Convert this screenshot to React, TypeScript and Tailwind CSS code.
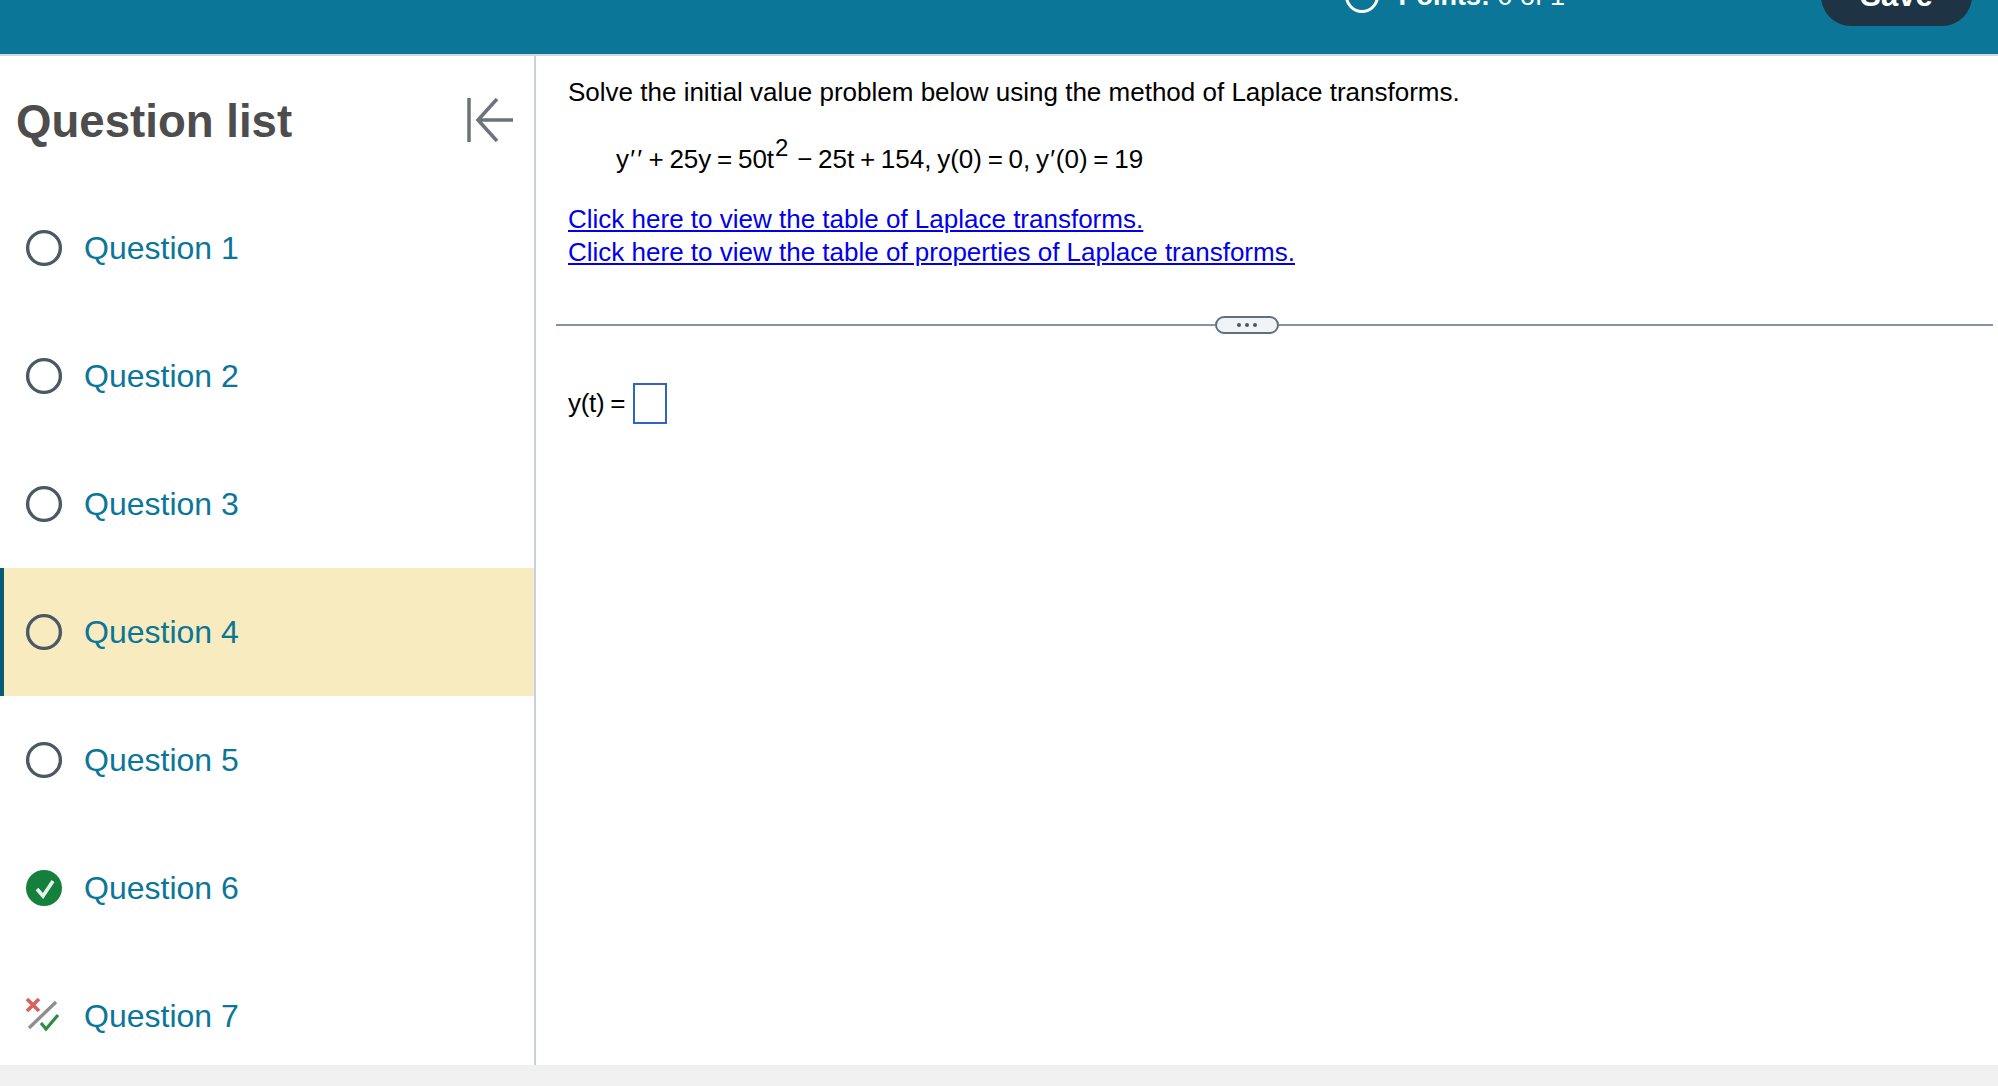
const questions = [
  { id: 1, status: "open" },
  { id: 2, status: "open" },
  { id: 3, status: "open" },
  { id: 4, status: "current" },
  { id: 5, status: "open" },
  { id: 6, status: "done" },
  { id: 7, status: "partial" },
];

function StatusIcon({ status }: { status: string }) {
  if (status === "done") {
    return (
      <svg width="38" height="38" viewBox="0 0 38 38" className="shrink-0">
        <circle cx="19" cy="19" r="18" fill="#14803c" />
        <path d="M12 20l6 7 10-15" fill="none" stroke="#e8f3ec" strokeWidth="3.6" />
      </svg>
    );
  }
  if (status === "partial") {
    return (
      <svg width="38" height="38" viewBox="0 0 38 38" className="shrink-0">
        <path d="M2 2l12 12M14 2L2 14" stroke="#d9605c" strokeWidth="3.6" />
        <path d="M4 31L31 5" stroke="#8f8f8f" strokeWidth="3.4" />
        <path d="M16 26l5 6 12-14" fill="none" stroke="#2e8b47" strokeWidth="3.2" />
      </svg>
    );
  }
  return (
    <svg width="38" height="38" viewBox="0 0 38 38" className="shrink-0">
      <circle cx="19" cy="19" r="16.4" fill="none" stroke="#4b5866" strokeWidth="3.4" />
    </svg>
  );
}

function QuestionRow({ id, status }: { id: number; status: string }) {
  const current = status === "current";
  return (
    <div
      className={
        current
          ? "flex h-[128px] items-center gap-[21px] border-l-4 border-[#055a75] bg-[#f8ebbf] pl-[21px]"
          : "flex h-[128px] items-center gap-[21px] pl-[25px]"
      }
    >
      <StatusIcon status={status} />
      <span className="text-[32px] text-[#0b7698]">Question {id}</span>
    </div>
  );
}

function Sidebar() {
  return (
    <aside className="w-[536px] shrink-0 overflow-hidden border-r-2 border-[#c8cfdf]">
      <div className="flex h-[128px] items-center justify-between pl-[16px] pr-[21px]">
        <h2 className="pt-[4px] text-[45.6px] font-bold text-[#4d4d4d]">Question list</h2>
        <svg width="46" height="46" viewBox="0 0 46 46" fill="none" stroke="#6b7478" strokeWidth="3.5">
          <path d="M2 1v44M30 2L11 23l19 21M11 23h35" />
        </svg>
      </div>
      {questions.map((q) => (
        <QuestionRow key={q.id} id={q.id} status={q.status} />
      ))}
    </aside>
  );
}

function Equation() {
  return (
    <p className="mt-[23px] flex h-[52px] items-end pb-[6px] pl-[60px] text-[26px] [word-spacing:-1.5px] text-black">
      <span>
        y<i className="tracking-[2px]">′′</i> + 25y = 50t
        <sup className="relative -top-[12px] ml-[1px] mr-[3px] align-baseline text-[24px]">2</sup> − 25t + 154, y(0) = 0, y<i className="mr-[2px]">′</i>(0) = 19
      </span>
    </p>
  );
}

function MainPanel() {
  return (
    <main className="min-w-0 flex-1 pr-[5px] pl-[20px] pt-[19px]">
      <p className="pl-[12px] text-[26px] leading-[35px] text-black">
        Solve the initial value problem below using the method of Laplace transforms.
      </p>
      <Equation />
      <div className="mt-[18px] pl-[12px] text-[26px] leading-[33px] text-[#0000ee] underline">
        <a className="block">Click here to view the table of Laplace transforms.</a>
        <a className="block">Click here to view the table of properties of Laplace transforms.</a>
      </div>
      <div className="mt-[47px] flex items-center">
        <div className="h-[2px] flex-1 bg-[#8593a5]" />
        <div className="flex h-[18px] w-[64px] items-center justify-center gap-[4px] rounded-full border-2 border-[#5f6f7f] bg-[#f1f4f7]">
          <span className="h-[4px] w-[4px] rounded-full bg-[#4b5866]" />
          <span className="h-[4px] w-[4px] rounded-full bg-[#4b5866]" />
          <span className="h-[4px] w-[4px] rounded-full bg-[#4b5866]" />
        </div>
        <div className="h-[2px] w-[714px] bg-[#8593a5]" />
      </div>
      <div className="mt-[49px] flex items-center gap-[8px] pl-[12px] text-[26px] tracking-[-0.3px] [word-spacing:-1px] text-black">
        <span>y(t) =</span>
        <span className="h-[41px] w-[34px] border-2 border-[#2f63c8]" />
      </div>
    </main>
  );
}

export default function App() {
  return (
    <div
      className="flex h-screen flex-col overflow-hidden bg-white"
      style={{ fontFamily: '"Liberation Sans", Arial, sans-serif' }}
    >
      <header className="flex h-[56px] shrink-0 items-start justify-end overflow-hidden border-b-2 border-[#d4d8dc] bg-[#0b7698]">
        <div className="-mt-[34px] flex items-center pr-[26px]">
          <div className="flex items-center gap-[19px] text-[27px] text-white">
            <span className="h-[34px] w-[34px] rounded-full border-[3px] border-white" />
            <span>
              <b>Points:</b> 0 of 1
            </span>
          </div>
          <div className="ml-[256px] flex h-[60px] w-[151px] items-center justify-center rounded-[30px] bg-[#1e3445] text-[31px] font-bold text-white">
            Save
          </div>
        </div>
      </header>
      <div className="flex min-h-0 flex-1">
        <Sidebar />
        <MainPanel />
      </div>
      <div className="h-[21px] shrink-0 bg-[#f0f0f0]" />
    </div>
  );
}
